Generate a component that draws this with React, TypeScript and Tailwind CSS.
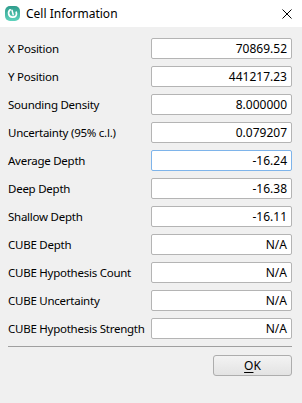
import React from "react";

const rows: [string, string][] = [
  ["X Position", "70869.52"],
  ["Y Position", "441217.23"],
  ["Sounding Density", "8.000000"],
  ["Uncertainty (95% c.l.)", "0.079207"],
  ["Average Depth", "-16.24"],
  ["Deep Depth", "-16.38"],
  ["Shallow Depth", "-16.11"],
  ["CUBE Depth", "N/A"],
  ["CUBE Hypothesis Count", "N/A"],
  ["CUBE Uncertainty", "N/A"],
  ["CUBE Hypothesis Strength", "N/A"],
];

function AppIcon() {
  return (
    <svg width="15" height="15" viewBox="0 0 15 15">
      <defs>
        <linearGradient id="g" x1="0" y1="0" x2="0" y2="1">
          <stop offset="0" stopColor="#2e9c8c" />
          <stop offset="1" stopColor="#5fd3bd" />
        </linearGradient>
      </defs>
      <rect x="0" y="0" width="15" height="15" rx="5" fill="url(#g)" />
      <path d="M5.2 3.8 C2.6 5.6 3 10.8 7.4 11.2 C10.8 11.4 12.2 8.6 11.2 6.2" fill="none" stroke="#ffffff" strokeWidth="1.7" strokeLinecap="round" />
      <path d="M7 4.3 L8.2 8.8" fill="none" stroke="#ffffff" strokeWidth="1.5" strokeLinecap="round" />
    </svg>
  );
}

export default function App() {
  return (
    <div
      className="w-[302px] h-[403px] bg-[#f0f0f0] flex flex-col text-[12px] text-black"
      style={{ fontFamily: '"Segoe UI", "Noto Sans", "Liberation Sans", sans-serif' }}
    >
      <div className="h-[27px] bg-white flex items-center pl-[5px] pr-[10px]">
        <AppIcon />
        <span className="ml-[6px] flex-1 text-[12px]">Cell Information</span>
        <svg width="10" height="10" viewBox="0 0 10 10">
          <path d="M0.5 0.5 L9.5 9.5 M9.5 0.5 L0.5 9.5" stroke="#000" strokeWidth="1" />
        </svg>
      </div>
      <div className="pt-[11px] pl-[8px] pr-[10px] flex flex-col">
        <div className="flex flex-col gap-[7px]">
          {rows.map(([label, value], i) => (
            <div key={label} className="flex items-center h-[21px]">
              <span className="w-[143px] whitespace-nowrap text-[11.5px] tracking-[-0.25px]">{label}</span>
              <div
                className={
                  "flex-1 h-[21px] bg-white rounded-[2px] border flex items-center justify-end pr-[4px] " +
                  (i === 4 ? "border-[#7eb4ea]" : "border-[#b4b4b4]")
                }
              >
                {value}
              </div>
            </div>
          ))}
        </div>
        <div className="mt-[7px] h-px bg-[#a0a0a0]" />
        <div className="mt-[8px] flex justify-end">
          <button className="w-[79px] h-[21px] rounded-[3px] border border-[#adadad] bg-gradient-to-b from-[#f3f3f3] to-[#e3e3e3] text-[12px] flex items-center justify-center">
            <span>
              <span className="underline underline-offset-2">O</span>K
            </span>
          </button>
        </div>
      </div>
    </div>
  );
}
